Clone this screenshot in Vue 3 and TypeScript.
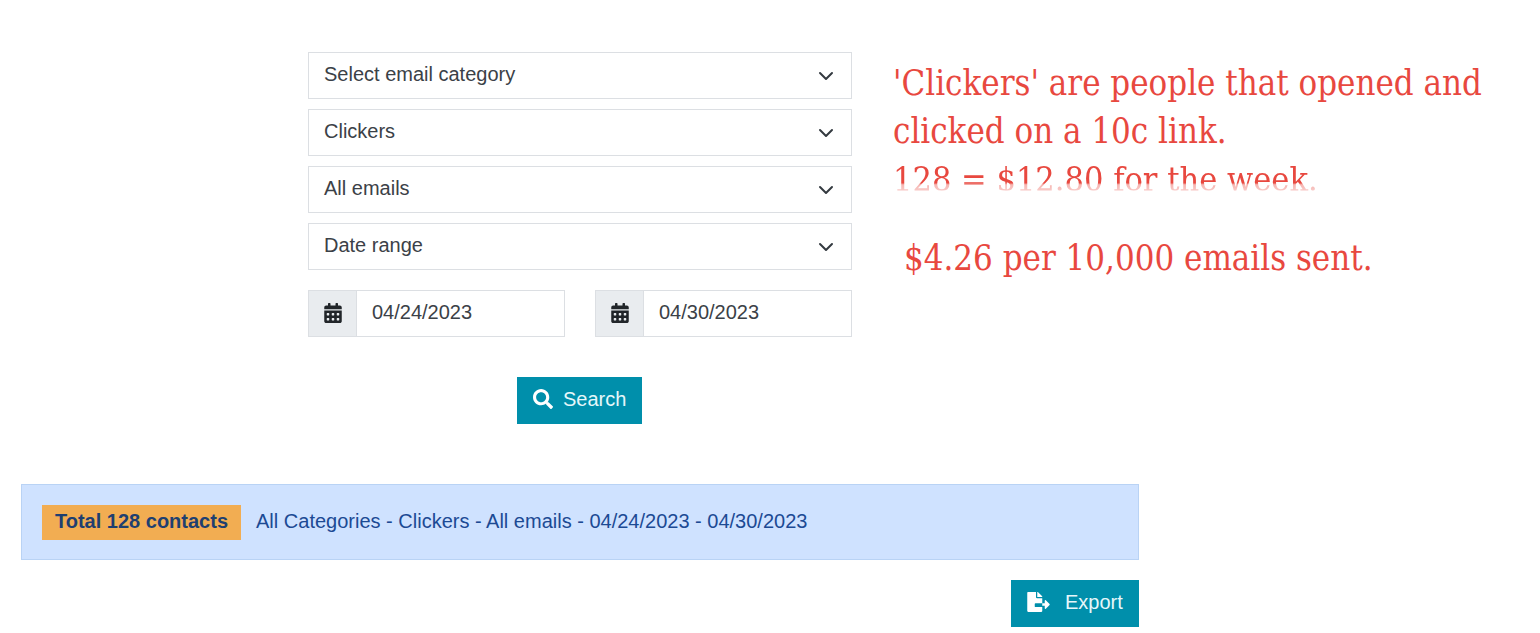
<script setup lang="ts">
const selects: string[] = ['Select email category', 'Clickers', 'All emails', 'Date range']
const dates: string[] = ['04/24/2023', '04/30/2023']
</script>

<template>
  <div class="page">
    <div class="top">
      <form class="filters" @submit.prevent>
        <div v-for="s in selects" :key="s" class="select">
          <span class="label">{{ s }}</span>
          <svg class="chev" viewBox="0 0 16 16" width="16" height="16" aria-hidden="true">
            <path d="M2 5l6 6 6-6" fill="none" stroke="#343a40" stroke-width="2" stroke-linecap="round" stroke-linejoin="round" />
          </svg>
        </div>
        <div class="dates">
          <div v-for="d in dates" :key="d" class="date">
            <span class="addon">
              <svg viewBox="0 0 448 512" width="18" height="20" aria-hidden="true">
                <path fill="#212529" d="M0 464c0 26.500 21.500 48 48 48h352c26.500 0 48-21.500 48-48V192H0v272zm320-196c0-6.600 5.400-12 12-12h40c6.600 0 12 5.400 12 12v40c0 6.600-5.400 12-12 12h-40c-6.600 0-12-5.400-12-12v-40zm0 128c0-6.600 5.400-12 12-12h40c6.600 0 12 5.400 12 12v40c0 6.600-5.400 12-12 12h-40c-6.600 0-12-5.400-12-12v-40zM192 268c0-6.600 5.400-12 12-12h40c6.600 0 12 5.400 12 12v40c0 6.600-5.400 12-12 12h-40c-6.600 0-12-5.400-12-12v-40zm0 128c0-6.600 5.400-12 12-12h40c6.600 0 12 5.400 12 12v40c0 6.600-5.400 12-12 12h-40c-6.600 0-12-5.400-12-12v-40zM64 268c0-6.600 5.400-12 12-12h40c6.600 0 12 5.400 12 12v40c0 6.600-5.400 12-12 12H76c-6.600 0-12-5.400-12-12v-40zm0 128c0-6.600 5.400-12 12-12h40c6.600 0 12 5.400 12 12v40c0 6.600-5.400 12-12 12H76c-6.600 0-12-5.400-12-12v-40zM400 64h-48V16c0-8.800-7.200-16-16-16h-32c-8.800 0-16 7.200-16 16v48H160V16c0-8.800-7.200-16-16-16h-32c-8.800 0-16 7.200-16 16v48H48C21.500 64 0 85.500 0 112v48h448v-48c0-26.500-21.500-48-48-48z" />
              </svg>
            </span>
            <span class="value">{{ d }}</span>
          </div>
        </div>
        <div class="actions">
          <button class="btn search" type="submit">
            <svg class="btn-icon" viewBox="0 0 512 512" width="20" height="20" aria-hidden="true">
              <path fill="#fff" d="M505 442.700L405.300 343c-4.500-4.500-10.600-7-17-7H372c27.600-35.300 44-79.700 44-128C416 93.100 322.900 0 208 0S0 93.100 0 208s93.100 208 208 208c48.300 0 92.700-16.400 128-44v16.300c0 6.400 2.500 12.500 7 17l99.700 99.700c9.400 9.400 24.600 9.400 33.900 0l28.300-28.300c9.400-9.400 9.400-24.600.1-34zM208 336c-70.700 0-128-57.200-128-128 0-70.700 57.200-128 128-128 70.700 0 128 57.200 128 128 0 70.700-57.200 128-128 128z" />
            </svg>
            <span class="label">Search</span>
          </button>
        </div>
      </form>
      <div class="notes">
        <p>'Clickers' are people that opened and<br />clicked on a 10c link.</p>
        <p class="faded">128 = $12.80 for the week.</p>
        <p class="indented">$4.26 per 10,000 emails sent.</p>
      </div>
    </div>
    <div class="results">
      <div class="banner">
        <strong class="total"><span class="label">Total 128 contacts</span></strong>
        <span class="label">All Categories - Clickers - All emails - 04/24/2023 - 04/30/2023</span>
      </div>
      <div class="export-row">
        <button class="btn export" type="button">
          <svg class="btn-icon" viewBox="0 0 576 512" width="23" height="20" aria-hidden="true">
            <path fill="#fff" d="M384 121.900c0-6.300-2.500-12.400-7-16.900L279.100 7c-4.500-4.500-10.600-7-17-7H256v128h128v-6.100zM192 336v-32c0-8.840 7.160-16 16-16h176V160H248c-13.200 0-24-10.800-24-24V0H24C10.700 0 0 10.700 0 24v464c0 13.300 10.700 24 24 24h336c13.300 0 24-10.700 24-24V384H208c-8.840 0-16-7.160-16-16zm379.050-28.950l-95.700-96.400c-10.100-10.100-27.400-3-27.400 11.300V288h-64v64h64v65.200c0 14.300 17.300 21.400 27.400 11.300l95.700-96.400c6.600-6.800 6.600-17.400 0-24z" />
          </svg>
          <span class="label">Export</span>
        </button>
      </div>
    </div>
  </div>
</template>

<style>
html, body { margin: 0; background: #fff; }
</style>

<style scoped>
.page {
  width: 1540px;
  height: 633px;
  overflow: hidden;
  box-sizing: border-box;
  padding: 52px 0 0 21px;
  font-family: "Liberation Sans", Arial, sans-serif;
  font-size: 20px;
  color: #3b4147;
}
.label { margin-bottom: 2px; }
.btn-icon { margin-bottom: 4px; }
.top {
  display: flex;
  align-items: flex-start;
  padding-left: 287px;
}
.filters {
  width: 544px;
  display: flex;
  flex-direction: column;
  gap: 10px;
}
.select {
  height: 47px;
  box-sizing: border-box;
  border: 1px solid #dcdfe3;
  padding: 0 17px 0 15px;
  display: flex;
  align-items: center;
  justify-content: space-between;
}
.chev { flex: none; }
.dates {
  display: flex;
  justify-content: space-between;
  margin-top: 10px;
}
.date {
  width: 257px;
  height: 47px;
  box-sizing: border-box;
  border: 1px solid #dcdfe3;
  display: flex;
}
.addon {
  width: 48px;
  box-sizing: border-box;
  flex: none;
  background: #e9ecef;
  border-right: 1px solid #dcdfe3;
  display: flex;
  align-items: center;
  justify-content: center;
  padding-bottom: 1px;
}
.value {
  padding: 0 0 2px 15px;
  display: flex;
  align-items: center;
}
.actions {
  display: flex;
  justify-content: center;
  margin-top: 30px;
  padding-right: 1px;
}
.btn {
  height: 47px;
  border: 0;
  padding: 0;
  background: #008fab;
  color: #e6f7fa;
  font: inherit;
  display: flex;
  align-items: center;
}
.search {
  width: 125px;
  padding-left: 16px;
  gap: 10px;
}
.notes {
  margin: 7px 0 0 41px;
  font-family: "DejaVu Serif Condensed", "DejaVu Serif", serif;
  font-size: 34.5px;
  line-height: 48px;
  color: #e8483f;
  white-space: nowrap;
}
.notes p { margin: 0; }
.notes .faded {
  font-size: 34px;
  -webkit-mask-image: linear-gradient(#000 58%, rgba(0,0,0,.4) 62%, rgba(0,0,0,.3) 73%, transparent 75%);
  mask-image: linear-gradient(#000 58%, rgba(0,0,0,.4) 62%, rgba(0,0,0,.3) 73%, transparent 75%);
}
.notes .indented {
  margin-top: 31px;
  padding-left: 11px;
}
.results {
  width: 1118px;
  margin-top: 60px;
}
.banner {
  height: 76px;
  box-sizing: border-box;
  background: #cfe2ff;
  border: 1px solid #b9d3f5;
  padding-left: 20px;
  display: flex;
  align-items: center;
  gap: 15px;
  color: #1c4a94;
}
.total {
  background: #f2ad52;
  color: #1f3f70;
  height: 35px;
  padding: 0 13px;
  display: flex;
  align-items: center;
}
.export-row {
  display: flex;
  justify-content: flex-end;
  margin-top: 20px;
}
.export {
  width: 128px;
  padding-left: 16px;
  gap: 15px;
}
</style>
